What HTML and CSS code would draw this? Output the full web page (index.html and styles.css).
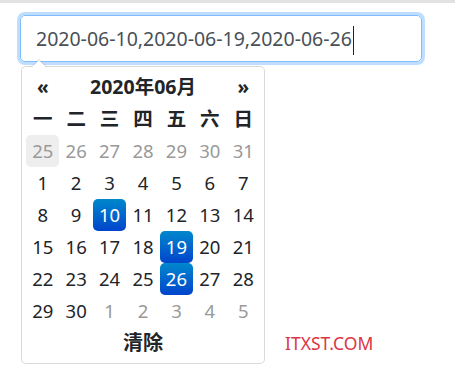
FILE: index.html
```html
<!DOCTYPE html>
<html lang="zh-CN">

<head>
  <meta charset="UTF-8">
  <meta name="viewport" content="width=device-width, initial-scale=1.0">
  <title>多日期选择</title>
  <link rel="stylesheet" href="styles.css">
</head>

<body>
  <div class="topbar"></div>

  <div class="page">
    <div class="date-input">2020-06-10,2020-06-19,2020-06-26<span class="text-cursor"></span></div>

    <div class="below">
      <div class="datepicker">
        <div class="dp-grid">
          <span class="dp-nav">&laquo;</span>
          <span class="dp-title">2020年06月</span>
          <span class="dp-nav">&raquo;</span>

          <span class="dow">一</span>
          <span class="dow">二</span>
          <span class="dow">三</span>
          <span class="dow">四</span>
          <span class="dow">五</span>
          <span class="dow">六</span>
          <span class="dow">日</span>

          <span class="day old focused">25</span>
          <span class="day old">26</span>
          <span class="day old">27</span>
          <span class="day old">28</span>
          <span class="day old">29</span>
          <span class="day old">30</span>
          <span class="day old">31</span>

          <span class="day">1</span>
          <span class="day">2</span>
          <span class="day">3</span>
          <span class="day">4</span>
          <span class="day">5</span>
          <span class="day">6</span>
          <span class="day">7</span>

          <span class="day">8</span>
          <span class="day">9</span>
          <span class="day active">10</span>
          <span class="day">11</span>
          <span class="day">12</span>
          <span class="day">13</span>
          <span class="day">14</span>

          <span class="day">15</span>
          <span class="day">16</span>
          <span class="day">17</span>
          <span class="day">18</span>
          <span class="day active">19</span>
          <span class="day">20</span>
          <span class="day">21</span>

          <span class="day">22</span>
          <span class="day">23</span>
          <span class="day">24</span>
          <span class="day">25</span>
          <span class="day active">26</span>
          <span class="day">27</span>
          <span class="day">28</span>

          <span class="day">29</span>
          <span class="day">30</span>
          <span class="day new">1</span>
          <span class="day new">2</span>
          <span class="day new">3</span>
          <span class="day new">4</span>
          <span class="day new">5</span>

          <span class="dp-clear">清除</span>
        </div>
      </div>

      <div class="brand">ITXST.COM</div>
    </div>
  </div>
</body>

</html>
```

FILE: styles.css
```css
body {
  font-family: 'Noto Sans', 'Noto Sans CJK SC', sans-serif;
  margin: 0;
  background-color: #fff;
  color: #212529;
}

.topbar {
  height: 3px;
  background-color: #e2e2e2;
}

.page {
  padding: 12px 20px 0;
}

.date-input {
  box-sizing: border-box;
  width: 402px;
  height: 47px;
  padding: 0 15px;
  border: 1px solid #80bdff;
  border-radius: 5px;
  box-shadow: 0 0 0 3px rgba(0, 123, 255, 0.25);
  font-size: 19.5px;
  line-height: 45px;
  color: #495057;
  white-space: nowrap;
}

.text-cursor {
  display: inline-block;
  width: 1px;
  height: 29px;
  margin-left: 1px;
  vertical-align: middle;
  background-color: #222;
}

.below {
  display: flex;
  align-items: flex-end;
  gap: 20px;
  margin-top: 4px;
  margin-left: 1px;
}

.datepicker {
  position: relative;
  width: 234px;
  padding: 4px;
  border: 1px solid rgba(0, 0, 0, 0.15);
  border-radius: 5px;
  background: white;
}

.datepicker:before {
  content: "";
  position: absolute;
  top: -8px;
  left: 9px;
  border-left: 8px solid transparent;
  border-right: 8px solid transparent;
  border-bottom: 8px solid rgba(0, 0, 0, 0.15);
}

.datepicker:after {
  content: "";
  position: absolute;
  top: -7px;
  left: 10px;
  border-left: 7px solid transparent;
  border-right: 7px solid transparent;
  border-bottom: 7px solid white;
}

.dp-grid {
  display: grid;
  grid-template-columns: repeat(7, 1fr);
  grid-auto-rows: 32px;
  text-align: center;
  line-height: 32px;
}

.dp-nav {
  font-size: 19px;
  font-weight: bold;
}

.dp-title {
  grid-column: span 5;
  font-size: 19.5px;
  font-weight: bold;
}

.dow {
  font-size: 19.5px;
  font-weight: bold;
}

.day {
  font-size: 18.5px;
  border-radius: 5px;
}

.day.old,
.day.new {
  color: #999;
}

.day.focused {
  background-color: #eee;
}

.day.active {
  color: white;
  background-image: linear-gradient(to bottom, #0088cc, #0044cc);
}

.dp-clear {
  grid-column: span 7;
  font-size: 20px;
  font-weight: bold;
}

.brand {
  margin-bottom: 5px;
  font-size: 17.5px;
  line-height: 32px;
  color: #dc3545;
}
```
